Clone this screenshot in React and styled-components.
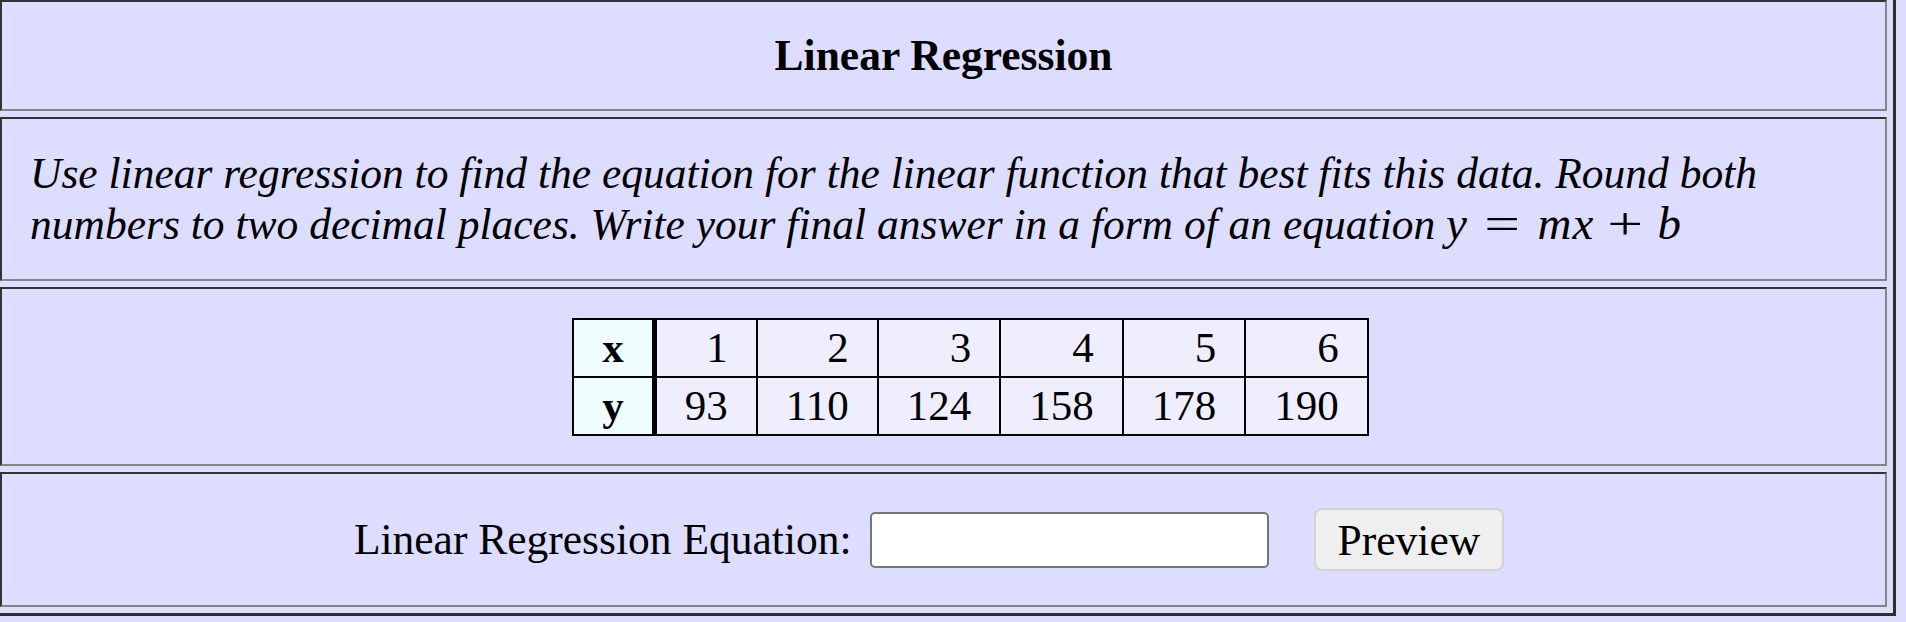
import React from 'react'
import styled, { createGlobalStyle } from 'styled-components'

const GlobalStyle = createGlobalStyle`
  body {
    margin: 0;
    background: #ddf;
    font-family: "Liberation Serif", "Times New Roman", serif;
    color: #000;
  }
`

const xs = [1, 2, 3, 4, 5, 6]
const ys = [93, 110, 124, 158, 178, 190]

function App() {
  return (
    <>
      <GlobalStyle />
      <Frame>
        <Cell>
          <Title>Linear Regression</Title>
        </Cell>
        <Cell>
          <Prompt>
            Use linear regression to find the equation for the linear function that best fits
            this data. Round both numbers to two decimal places. Write your final answer in a
            form of an equation <Math>y<Op wide>=</Op>mx<Op>+</Op>b</Math>
          </Prompt>
        </Cell>
        <Cell>
          <TableRow>
            <DataTable>
              <tbody>
                <tr>
                  <HeadCell>x</HeadCell>
                  {xs.map((v) => (
                    <ValueCell key={v} align="right">
                      {v}
                    </ValueCell>
                  ))}
                </tr>
                <tr>
                  <HeadCell>y</HeadCell>
                  {ys.map((v) => (
                    <ValueCell key={v} align="center">
                      {v}
                    </ValueCell>
                  ))}
                </tr>
              </tbody>
            </DataTable>
          </TableRow>
        </Cell>
        <Cell>
          <AnswerRow>
            <Label>Linear Regression Equation:</Label>
            <AnswerInput type="text" />
            <PreviewButton>Preview</PreviewButton>
          </AnswerRow>
        </Cell>
      </Frame>
    </>
  )
}

export default App

const Frame = styled.div`
  box-sizing: border-box;
  width: 1896px;
  display: flex;
  flex-direction: column;
  gap: 6px;
  padding: 0 6px 6px 0;
  border-right: 3px solid #2e2e2e;
  border-bottom: 3px solid #2e2e2e;
`

const Cell = styled.div`
  background: #ddf;
  border-top: 2px solid #333;
  border-left: 2px solid #333;
  border-right: 2px solid #858585;
  border-bottom: 2px solid #858585;
`

const Title = styled.div`
  padding: 29px 28px;
  text-align: center;
  font-weight: bold;
  font-size: 43.5px;
  line-height: 49px;
`

const Prompt = styled.div`
  padding: 29px 28px 30px;
  font-style: italic;
  font-size: 43.5px;
  line-height: 50px;
`

const Math = styled.span`
  white-space: nowrap;
  font-size: 1.08em;
  letter-spacing: 0.02em;
`

const Op = styled.span`
  display: inline-block;
  font-style: normal;
  transform: scaleX(1.35);
  margin: 0 ${(p) => (p.wide ? '0.45em' : '0.38em')};
`

const TableRow = styled.div`
  display: flex;
  justify-content: center;
  padding: 29px 0 28px 54px;
`

const DataTable = styled.table`
  border-collapse: collapse;
  border: 2px solid #000;
  font-size: 43px;
  line-height: 50px;
`

const HeadCell = styled.td`
  background: #efffff;
  font-weight: bold;
  text-align: center;
  padding: 3px 28px;
  border: 2px solid #000;
  border-right: 5px solid #000;
`

const ValueCell = styled.td`
  background: #eef;
  text-align: ${(p) => p.align};
  padding: 3px 28px;
  border: 2px solid #000;
`

const AnswerRow = styled.div`
  display: flex;
  align-items: center;
  justify-content: center;
  padding: 34px 29px 34px 0;
`

const Label = styled.span`
  font-size: 43.5px;
  line-height: 49px;
  margin-right: 18px;
`

const AnswerInput = styled.input`
  box-sizing: border-box;
  width: 399px;
  height: 56px;
  border: 2px solid #767676;
  border-radius: 5px;
  background: #fff;
  margin-right: 45px;
  font-size: 30px;
`

const PreviewButton = styled.button`
  box-sizing: border-box;
  height: 63px;
  padding: 0 22px;
  background: #efefef;
  border: 2px solid #d3d3d3;
  border-radius: 8px;
  font-family: "Liberation Serif", "Times New Roman", serif;
  font-size: 43.5px;
  color: #000;
`
